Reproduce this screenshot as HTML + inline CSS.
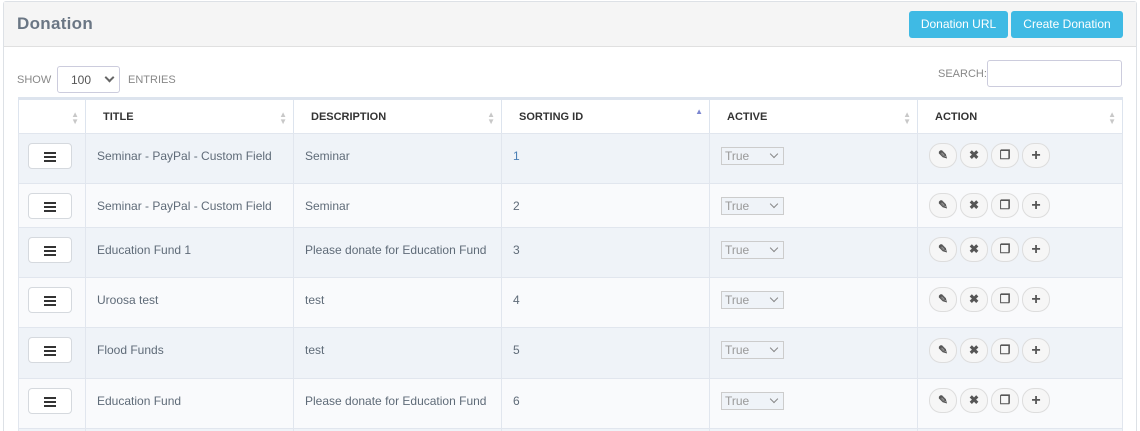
<!DOCTYPE html>
<html><head><meta charset="utf-8"><style>
*{box-sizing:border-box;margin:0;padding:0}
html,body{width:1140px;height:431px;overflow:hidden}
body{background:#fff;font-family:"Liberation Sans",sans-serif;color:#576373;position:relative}
.panel{position:absolute;left:3px;top:1px;width:1134px;height:430px;border:1px solid #dde1e6;border-bottom:none;border-radius:3px 3px 0 0}
.ph{position:absolute;left:0;top:0;width:100%;height:45px;background:#f5f5f5;border-bottom:1px solid #e0e0e0}
.ph h1{position:absolute;left:13px;top:12px;font-size:17px;font-weight:bold;color:#6a7684;letter-spacing:.3px}
.btn{position:absolute;top:9px;height:27px;background:#3fbae4;color:#fff;font-size:12px;border-radius:3px;line-height:27px;text-align:center}
.lbl{position:absolute;font-size:11px;color:#888;}
.sel{position:absolute;left:57px;top:66px;width:63px;height:27px;border:1px solid #ccd;border-radius:3px;font-size:12px;color:#555;padding:6px 0 0 13px}
.chev{position:absolute;width:7px;height:7px;border-right:2px solid #666;border-bottom:2px solid #666;transform:rotate(45deg)}
table{position:absolute;left:18px;top:97px;width:1104px;border-collapse:collapse;font-size:12px;table-layout:fixed}
th{height:36px;border:1px solid #dde4ee;border-top:3px solid #dde4ee;text-align:left;padding-left:17px;font-size:11px;color:#333;position:relative}
td{border:1px solid #e1e6ee;padding-left:11px;color:#5f6b78;position:relative}
tr.o td{background:#eff3f8}tr.e td{background:#f9fafc}
.sa{position:absolute;right:6px;top:11px;color:#c8c8c8;font-size:8px;line-height:7px}
.hb{width:44px;height:26px;border:1px solid #d5d9de;border-radius:4px;background:#fff;margin-left:-1px;position:relative}
.hb i{position:absolute;left:15px;height:2px;width:12px;background:#333}
.tsel{width:63px;height:18px;border:1px solid #ccc;background:#eff3f8;color:#999;font-size:12px;padding:1px 0 0 3px;position:relative}
.ab{display:inline-block;width:28px;height:25px;border:1px solid #ddd;border-radius:12px;background:#f6f6f6;margin-right:3px;vertical-align:middle;text-align:center;line-height:23px;font-size:12px;color:#555;font-weight:bold}
</style></head><body>
<div class="panel">
<div class="ph"><h1>Donation</h1>
<div class="btn" style="left:905px;width:99px">Donation URL</div>
<div class="btn" style="left:1007px;width:112px">Create Donation</div></div>
</div>
<div class="lbl" style="left:17px;top:74px">SHOW</div>
<div class="sel">100<span class="chev" style="left:48px;top:7px"></span></div>
<div class="lbl" style="left:128px;top:74px">ENTRIES</div>
<div class="lbl" style="left:938px;top:68px">SEARCH:</div>
<div style="position:absolute;left:987px;top:60px;width:135px;height:27px;border:1px solid #ccd;border-radius:3px"></div>
<table>
<colgroup><col style="width:67px"><col style="width:208px"><col style="width:208px"><col style="width:208px"><col style="width:208px"><col style="width:205px"></colgroup>
<tr><th><span class="sa">▲<br>▼</span></th><th>TITLE<span class="sa">▲<br>▼</span></th><th>DESCRIPTION<span class="sa">▲<br>▼</span></th><th>SORTING ID<span class="sa" style="color:#7b86d0;top:8px">▲</span></th><th>ACTIVE<span class="sa">▲<br>▼</span></th><th>ACTION<span class="sa">▲<br>▼</span></th></tr>
</table>
<div id="rows"></div>
<script>
var d=[["Seminar - PayPal - Custom Field","Seminar","1",50,1],["Seminar - PayPal - Custom Field","Seminar","2",44,0],["Education Fund 1","Please donate for Education Fund","3",50,1],["Uroosa test","test","4",50,0],["Flood Funds","test","5",51,1],["Education Fund","Please donate for Education Fund","6",50,0]];
var h='<table style="top:133px">'+document.querySelector('colgroup').outerHTML;
d.forEach(function(r){var pb=r[3]>46?'padding-bottom:6px;':'';h+='<tr class="'+(r[4]?'o':'e')+'" style="height:'+r[3]+'px"><td style="padding-left:10px;'+pb+'"><div class="hb"><i style="top:8px"></i><i style="top:12px"></i><i style="top:16px"></i></div></td><td style="'+pb+'">'+r[0]+'</td><td style="'+pb+'">'+r[1]+'</td><td style="'+pb+'color:'+(r[2]=='1'?'#4a7fb5':'#5f6b78')+'">'+r[2]+'</td><td style="'+pb+'"><div class="tsel">True<span class="chev" style="left:49px;top:3px;width:6px;height:6px;border-color:#888;border-width:0 1.5px 1.5px 0"></span></div></td><td style="'+pb+'"><span class="ab">✎</span><span class="ab">✖</span><span class="ab">❐</span><span class="ab" style="font-size:16px">+</span></td></tr>'});
h+='<tr class="o" style="height:4px"><td></td><td></td><td></td><td></td><td></td><td></td></tr></table>';document.getElementById('rows').innerHTML=h;
</script>
</body></html>
